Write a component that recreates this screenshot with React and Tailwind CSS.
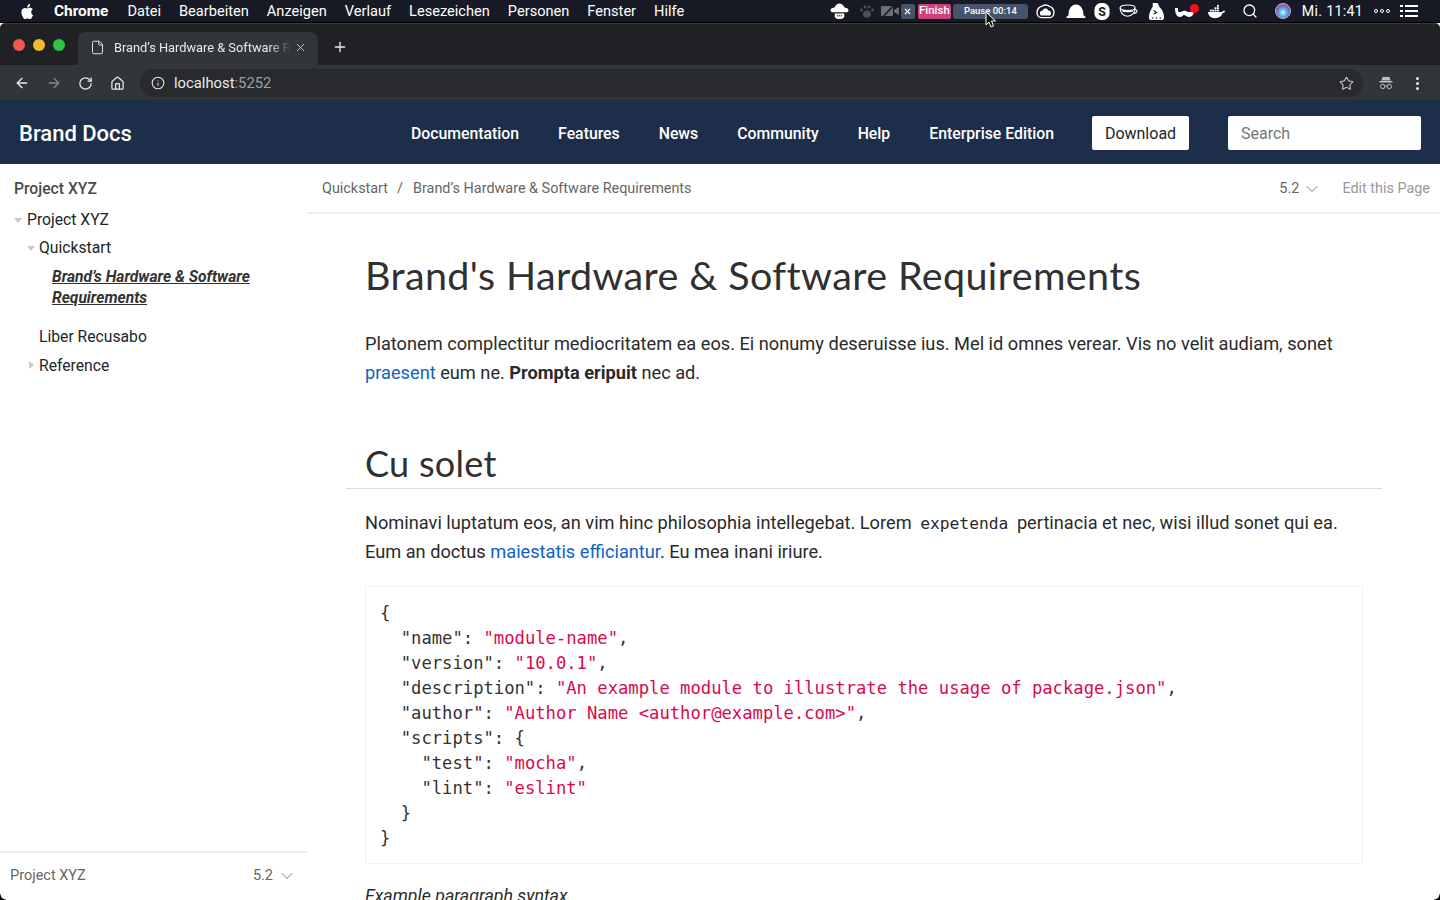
import { ArrowLeft, ArrowRight, RotateCw, Home, Info, Star, Search, File, X, Plus, ChevronDown } from 'lucide-react'

const menus = ['Datei', 'Bearbeiten', 'Anzeigen', 'Verlauf', 'Lesezeichen', 'Personen', 'Fenster', 'Hilfe']
const navLinks = ['Documentation', 'Features', 'News', 'Community', 'Help', 'Enterprise Edition']

// Zeilen des Codeblocks: [Text davor, String, Text danach]
const codeLines = [
  ['{'],
  ['  "name": ', '"module-name"', ','],
  ['  "version": ', '"10.0.1"', ','],
  ['  "description": ', '"An example module to illustrate the usage of package.json"', ','],
  ['  "author": ', '"Author Name <author@example.com>"', ','],
  ['  "scripts": {'],
  ['    "test": ', '"mocha"', ','],
  ['    "lint": ', '"eslint"'],
  ['  }'],
  ['}'],
]

function Apple() {
  return (
    <svg viewBox="0 0 24 24" className="w-[18px] h-[19px] fill-white">
      <path d="M17.6 12.7c0-2.4 2-3.6 2.1-3.7-1.1-1.7-2.9-1.9-3.5-1.9-1.5-.2-2.9.9-3.7.9-.8 0-2-.9-3.2-.8-1.7 0-3.2 1-4 2.5-1.7 3-.4 7.400 1.200 9.800.8 1.200 1.800 2.500 3 2.500 1.200-.1 1.700-.8 3.100-.8 1.500 0 1.900.8 3.200.8 1.300 0 2.200-1.200 3-2.400.9-1.400 1.300-2.700 1.300-2.800-.1 0-2.500-1-2.500-4.100zM15.200 5.300c.7-.8 1.100-2 1-3.200-1 0-2.200.7-2.900 1.500-.6.7-1.200 1.900-1 3.100 1.100.1 2.200-.6 2.900-1.400z" />
    </svg>
  )
}

function MenuBar() {
  return (
    <div className="h-[22px] bg-[#171a24] flex items-center text-white text-[14.6px] font-['Roboto',sans-serif] shrink-0">
      <div className="ml-[18px] w-[18px] flex"><Apple /></div>
      <span className="ml-[18px] pt-[1px] font-bold text-[15.4px]">Chrome</span>
      <div className="ml-[19px] pt-[2px] flex gap-[18px]">
        {menus.map(m => <span key={m}>{m}</span>)}
      </div>
      <div className="ml-auto flex items-center h-full">
        {/* Wolke mit Punkten */}
        <svg viewBox="0 0 20 18" className="w-[19px] h-[18px]">
          <path d="M.5 8.500c0-2 1.500-3.200 4-3 1-2.500 3.400-4.500 5.500-4.500s4.500 2 5.500 4.500c2.500-.2 4 1 4 3 0 1.200-1 1.800-2 1.800H2.500c-1 0-2-.6-2-1.800z" fill="#fff" />
          <path d="M5 11.500h10v3c0 1.800-2 3-5 3s-5-1.200-5-3z" fill="#fff" />
          <circle cx="8" cy="14" r=".7" fill="#333" /><circle cx="10" cy="14" r=".7" fill="#333" /><circle cx="12" cy="14" r=".7" fill="#333" />
        </svg>
        {/* Pfote */}
        <svg viewBox="0 0 16 14" className="w-[16px] h-[14px] ml-[10px] fill-[#4d5057]">
          <ellipse cx="8" cy="10" rx="4" ry="3.500" /><circle cx="2.500" cy="6" r="1.500" /><circle cx="6" cy="3" r="1.500" /><circle cx="10" cy="3" r="1.500" /><circle cx="13.500" cy="6" r="1.500" />
        </svg>
        {/* Kamera aus */}
        <svg viewBox="0 0 18 12" className="w-[18px] h-[12px] ml-[6px]">
          <rect x="0" y="1" width="12" height="10" rx="1" fill="#6b6e74" />
          <path d="M13 5l5-3v8l-5-3z" fill="#6b6e74" />
          <path d="M2 12L13 0" stroke="#171a24" strokeWidth="1.500" />
        </svg>
        <div className="ml-[2px] w-[14px] h-[15px] rounded-[2px] bg-[#47536a] flex items-center justify-center">
          <X className="w-[9px] h-[9px] text-white" strokeWidth={3} />
        </div>
        <div className="ml-[3px] w-[33px] h-[15px] rounded-[2px] bg-[#d0427e] flex items-center justify-center text-[11.5px] font-medium">Finish</div>
        <div className="ml-[2px] w-[75px] h-[15px] rounded-[3px] bg-[#47536a] flex items-center justify-center text-[9.5px] font-medium">Pause 00:14</div>
        {/* Wolke */}
        <svg viewBox="0 0 20 16" className="w-[19px] h-[15px] ml-[8px]">
          <path d="M6 2.500C7 1.500 8.500 1 10 1s3 .5 4 1.500c2.500 .3 5 3 5 6.500 0 3-2 5.500-4.500 5.500h-9C3 14.500 1 12 1 9c0-3.500 2.500-6.200 5-6.500z" fill="none" stroke="#fff" strokeWidth="1.500" />
          <path d="M4 10c0-2 1.500-3.200 3-3 .6-1.500 1.700-2.200 3-2.200s2.400.7 3 2.200c1.500-.2 3 1 3 3 0 1.300-1 2.200-2 2.200H6c-1 0-2-.9-2-2.200z" fill="#fff" />
        </svg>
        {/* Glocke */}
        <svg viewBox="0 0 20 15" className="w-[20px] h-[15px] ml-[11px] fill-white">
          <path d="M2.500 11.500C2.500 4.500 5.500 .5 10 .5s7.500 4 7.500 11c1.300 .3 2 1 2 2.500H.5c0-1.500 .7-2.200 2-2.500z" />
        </svg>
        {/* Skype */}
        <svg viewBox="0 0 16 18" className="w-[16px] h-[17px] ml-[8px]">
          <rect x="0" y="0" width="16" height="18" rx="7" fill="#fff" />
          <text x="8" y="13.500" textAnchor="middle" fontSize="13" fontWeight="700" fontFamily="Roboto, sans-serif" fill="#171a24">S</text>
        </svg>
        {/* Tasse */}
        <svg viewBox="0 0 20 16" className="w-[19px] h-[15px] ml-[9px]" fill="none" stroke="#fff" strokeWidth="1.200">
          <ellipse cx="9" cy="4" rx="8" ry="3" />
          <path d="M1 4c0 5 3 9 8 9s8-4 8-9" />
          <path d="M3 7c2 1.500 10 1.500 12 0" />
          <path d="M16 6c2-.5 3.500.5 3 2s-2 2-3.500 2" />
        </svg>
        {/* Figur */}
        <svg viewBox="0 0 18 20" className="w-[17px] h-[19px] ml-[10px] fill-white">
          <path d="M5 1l5 0 2 4c3 3 5 7 5 11 0 2-1 3-3 3H4c-2 0-3-1-3-3 0-4 2-8 4-11z" />
          <path d="M6 9l3 2-3 2" fill="none" stroke="#171a24" strokeWidth="1.200" />
          <circle cx="5" cy="17" r=".8" fill="#171a24" /><circle cx="9" cy="17" r=".8" fill="#171a24" /><circle cx="13" cy="17" r=".8" fill="#171a24" />
        </svg>
        {/* Schnauzer mit rotem Punkt */}
        <div className="relative ml-[10px] w-[21px] h-[16px]">
          <svg viewBox="0 0 20 14" className="w-[20px] h-[14px] mt-[2px] fill-white">
            <path d="M0 3h3v3c1 2 3 1 5 0 1-.5 2-.5 3 0 1 1 3 1 4 1 2 0 3-1 4-2v1c0 3-2 6-5 6-2 0-4-2-5-2s-2 2-4 2C2 12 0 9 0 3z" />
          </svg>
          <div className="absolute top-[1px] right-[-3px] w-[9px] h-[9px] rounded-full bg-[#f5121d]" />
        </div>
        {/* Docker */}
        <svg viewBox="0 0 20 15" className="w-[19px] h-[15px] ml-[11px] fill-white">
          <path d="M1 8h15c.5-1 1.500-1.500 3-1-.3 1.500-1.500 2-2.500 2-1 3-4 5.500-8 5.500C4 14.500 1.500 12 1 8z" />
          <rect x="3" y="5.500" width="2" height="2" /><rect x="5.500" y="5.500" width="2" height="2" /><rect x="8" y="5.500" width="2" height="2" /><rect x="10.500" y="5.500" width="2" height="2" />
          <rect x="8" y="3" width="2" height="2" /><rect x="10.500" y="3" width="2" height="2" /><rect x="10.500" y=".5" width="2" height="2" />
        </svg>
        <Search className="w-[16px] h-[16px] ml-[16px] text-white" strokeWidth={2} />
        <div className="ml-[17px] w-[16px] h-[16px] rounded-full bg-[radial-gradient(circle_at_50%_60%,#e8f4ff_0%,#5cc0e8_30%,#7a5cd6_60%,#c85a9a_85%)] border border-[#bbb]" />
        <span className="ml-[11px] pt-[1px] text-[14.2px] tracking-[0.3px]">Mi. 11:41</span>
        <div className="ml-[11px] flex gap-[2px]">
          <span className="w-[4px] h-[4px] rounded-full border border-white" />
          <span className="w-[4px] h-[4px] rounded-full border border-white" />
          <span className="w-[4px] h-[4px] rounded-full border border-white" />
        </div>
        {/* Liste */}
        <div className="ml-[10px] mr-[22px] w-[18px] flex flex-col gap-[3px]">
          <div className="h-[2px] bg-[linear-gradient(to_right,#fff_3px,transparent_3px,transparent_5px,#fff_5px)]" />
          <div className="h-[2px] bg-[linear-gradient(to_right,#fff_3px,transparent_3px,transparent_5px,#fff_5px)]" />
          <div className="h-[2px] bg-[linear-gradient(to_right,#fff_3px,transparent_3px,transparent_5px,#fff_5px)]" />
        </div>
      </div>
    </div>
  )
}

function TabStrip() {
  return (
    <div className="h-[42px] bg-[#202124] rounded-t-[5px] border-t border-[#3a3b3e] flex items-end shrink-0">
      <div className="flex gap-[8px] ml-[13px] self-start mt-[15px]">
        <span className="w-[12px] h-[12px] rounded-full bg-[#ee5a52]" />
        <span className="w-[12px] h-[12px] rounded-full bg-[#f5b82e]" />
        <span className="w-[12px] h-[12px] rounded-full bg-[#28c840]" />
      </div>
      <div className="ml-[13px] w-[240px] h-[33px] pb-[2px] bg-[#323639] rounded-t-[8px] flex items-center text-[#e8eaed] font-['Roboto',sans-serif] text-[12.8px]">
        <File className="ml-[12px] w-[15px] h-[15px]" strokeWidth={1.5} />
        <span className="ml-[9px] w-[180px] overflow-hidden whitespace-nowrap [mask-image:linear-gradient(to_right,#000_86%,transparent_98%)]">Brand’s Hardware &amp; Software Requirements</span>
        <X className="w-[13px] h-[13px] text-[#bdc1c6]" strokeWidth={1.8} />
      </div>
      <Plus className="ml-[14px] mb-[10px] w-[16px] h-[16px] text-[#e8eaed]" strokeWidth={2} />
    </div>
  )
}

function Toolbar() {
  return (
    <div className="h-[35px] pt-[1px] bg-[#323639] flex items-center shrink-0 font-['Roboto',sans-serif]">
      <ArrowLeft className="ml-[14px] w-[16px] h-[16px] text-[#e8eaed]" strokeWidth={2} />
      <ArrowRight className="ml-[16px] w-[16px] h-[16px] text-[#80868b]" strokeWidth={2} />
      <RotateCw className="ml-[16px] w-[15px] h-[15px] text-[#e8eaed]" strokeWidth={2} />
      <Home className="ml-[17px] w-[15px] h-[15px] text-[#e8eaed]" strokeWidth={2} />
      <div className="ml-[15px] w-[1223px] h-[28px] rounded-full bg-[#292a2d] flex items-center text-[14.8px]">
        <Info className="ml-[11px] w-[14px] h-[14px] text-[#e8eaed]" strokeWidth={1.8} />
        <span className="ml-[9px] text-[#e8eaed]">localhost</span>
        <span className="text-[#9aa0a6]">:5252</span>
        <Star className="ml-auto mr-[9px] w-[15px] h-[15px] text-[#bdc1c6]" strokeWidth={1.8} />
      </div>
      {/* Inkognito */}
      <svg viewBox="0 0 14 14" className="ml-[16px] w-[14px] h-[14px]" fill="#bdc1c6">
        <path d="M3.500 1h7l1 3.500h-9z" />
        <rect x="0.500" y="5" width="13" height="1.500" />
        <circle cx="3.700" cy="10.500" r="2.200" fill="none" stroke="#bdc1c6" strokeWidth="1" />
        <circle cx="10.300" cy="10.500" r="2.200" fill="none" stroke="#bdc1c6" strokeWidth="1" />
        <path d="M5.800 10h2.400" stroke="#bdc1c6" strokeWidth="1" />
      </svg>
      <div className="ml-[23px] flex flex-col gap-[2px]">
        <span className="w-[3px] h-[3px] rounded-full bg-[#e8eaed]" />
        <span className="w-[3px] h-[3px] rounded-full bg-[#e8eaed]" />
        <span className="w-[3px] h-[3px] rounded-full bg-[#e8eaed]" />
      </div>
    </div>
  )
}

function NavBar() {
  return (
    <div className="h-[64px] pt-[2px] bg-[#1c2e4a] flex items-center shrink-0 text-white font-['Roboto',sans-serif]">
      <span className="ml-[19px] text-[22px] font-medium">Brand Docs</span>
      <div className="ml-auto pt-[1px] flex items-center gap-[39px] text-[15.8px] font-medium">
        {navLinks.map(l => <span key={l}>{l}</span>)}
      </div>
      <div className="ml-[38px] w-[97px] h-[34px] pt-[2px] bg-white rounded-[2px] text-[#212529] text-[16px] flex items-center justify-center">Download</div>
      <div className="ml-[39px] mr-[19px] w-[193px] h-[34px] pt-[2px] bg-white rounded-[2px] text-[#777] text-[16px] flex items-center pl-[13px]">Search</div>
    </div>
  )
}

function Caret({ open }) {
  return open
    ? <span className="w-0 h-0 border-x-[4px] border-x-transparent border-t-[5px] border-t-[#c8c8c8]" />
    : <span className="w-0 h-0 border-y-[4px] border-y-transparent border-l-[5px] border-l-[#c8c8c8]" />
}

function Sidebar() {
  return (
    <aside className="w-[307px] shrink-0 flex flex-col font-['Roboto',sans-serif] text-[#212529]">
      <div className="flex-1 pt-[15px] pl-[14px] text-[15.7px]">
        <div className="h-[20px] leading-[20px] font-medium text-[#4a4a4a]">Project XYZ</div>
        <div className="mt-[11px] h-[20px] leading-[20px] flex items-center">
          <span className="w-[13px] flex"><Caret open /></span>Project XYZ
        </div>
        <div className="mt-[8px] ml-[13px] h-[20px] leading-[20px] flex items-center">
          <span className="w-[12px] flex"><Caret open /></span>Quickstart
        </div>
        <div className="mt-[9px] ml-[38px] w-[240px] leading-[21px] text-[#333] font-bold italic underline text-[15.6px]">
          Brand’s Hardware &amp; Software Requirements
        </div>
        <div className="mt-[18px] ml-[25px] h-[20px] leading-[20px]">Liber Recusabo</div>
        <div className="mt-[9px] ml-[13px] h-[20px] leading-[20px] flex items-center">
          <span className="w-[12px] flex mb-[2px] ml-[2px] -mr-[2px]"><Caret /></span>Reference
        </div>
      </div>
      <div className="h-[49px] pb-[1px] border-t-2 border-[#eceef0] flex items-center text-[14.5px] text-[#666] pl-[10px]">
        <span>Project XYZ</span>
        <span className="ml-auto">5.2</span>
        <ChevronDown className="ml-[4px] mr-[10px] w-[20px] h-[20px] text-[#666]" strokeWidth={1} />
      </div>
    </aside>
  )
}

function Code() {
  return (
    <div className="mt-[20px] w-[998px] h-[278px] border border-[#f0f0f0] pl-[14px] pt-[14px] text-[17.2px] leading-[25px] text-[#333] font-['DejaVu_Sans_Mono',monospace]">
      {codeLines.map(([before, str, after], i) => (
        <div key={i} className="h-[25px] whitespace-pre">
          {before}<span className="text-[#d9094f]">{str}</span>{after}
        </div>
      ))}
    </div>
  )
}

function Main() {
  return (
    <main className="flex-1 min-w-0 font-['Roboto',sans-serif] text-[#2a2a2a]">
      <div className="h-[50px] pt-[1px] border-b-2 border-[#eceef0] flex items-center text-[14.4px] text-[#666]">
        <span className="ml-[15px]">Quickstart</span>
        <span className="ml-[9px]">/</span>
        <span className="ml-[10px]">Brand’s Hardware &amp; Software Requirements</span>
        <span className="ml-auto text-[14.5px]">5.2</span>
        <ChevronDown className="ml-[3px] w-[20px] h-[20px]" strokeWidth={1} />
        <span className="ml-[20px] mr-[10px] text-[#999]">Edit this Page</span>
      </div>
      <div className="pl-[39px] w-[1075px] overflow-hidden">
        <h1 className="pl-[19px] mt-[36px] h-[50px] leading-[50px] text-[39.5px] tracking-[0.38px] text-[#303030] font-['Lato',sans-serif] font-normal whitespace-nowrap">Brand's Hardware &amp; Software Requirements</h1>
        <p className="pl-[19px] mt-[29px] text-[18.22px] leading-[29px] w-[1000px]">
          Platonem complectitur mediocritatem ea eos. Ei nonumy deseruisse ius. Mel id omnes verear. Vis no velit audiam, sonet <a className="text-[#0f62c4]">praesent</a> eum ne. <b>Prompta eripuit</b> nec ad.
        </p>
        <h2 className="pl-[19px] mt-[52px] h-[50px] leading-[48px] text-[36px] tracking-[0.3px] text-[#303030] font-['Lato',sans-serif] font-normal border-b border-[#dcdcdc] w-[1036px]">Cu solet</h2>
        <p className="pl-[19px] mt-[19px] text-[18.22px] leading-[29px] w-[1000px]">
          Nominavi luptatum eos, an vim hinc philosophia intellegebat. Lorem <code className="mx-[4px] text-[16.3px] leading-none font-['DejaVu_Sans_Mono',monospace]">expetenda</code> pertinacia et nec, wisi illud sonet qui ea. Eum an doctus <a className="text-[#0f62c4]">maiestatis efficiantur</a>. Eu mea inani iriure.
        </p>
        <div className="pl-[19px]">
          <Code />
          <p className="mt-[17px] text-[17.8px] leading-[29px] italic">Example paragraph syntax</p>
        </div>
      </div>
    </main>
  )
}

export default function App() {
  return (
    <div className="relative w-[1440px] h-[900px] overflow-hidden bg-white">
      <div className="h-full flex flex-col">
        <MenuBar />
        <div className="h-[1px] bg-black shrink-0" />
        <TabStrip />
        <Toolbar />
        <NavBar />
        <div className="flex-1 flex min-h-0">
          <Sidebar />
          <Main />
        </div>
      </div>
      {/* Mauszeiger */}
      <svg viewBox="0 0 12 18" className="absolute left-[985px] top-[11px] w-[12px] h-[18px]">
        <path d="M1 1v13l3-3 2 5 2.500-1-2-5h4z" fill="#111" stroke="#fff" strokeWidth="1" />
      </svg>
      {/* Bildschirmecken */}
      <div className="absolute left-0 bottom-0 w-[6px] h-[6px] bg-[radial-gradient(circle_at_100%_0,transparent_5px,#000_6px)]" />
      <div className="absolute right-0 bottom-0 w-[6px] h-[6px] bg-[radial-gradient(circle_at_0_0,transparent_5px,#000_6px)]" />
    </div>
  )
}
